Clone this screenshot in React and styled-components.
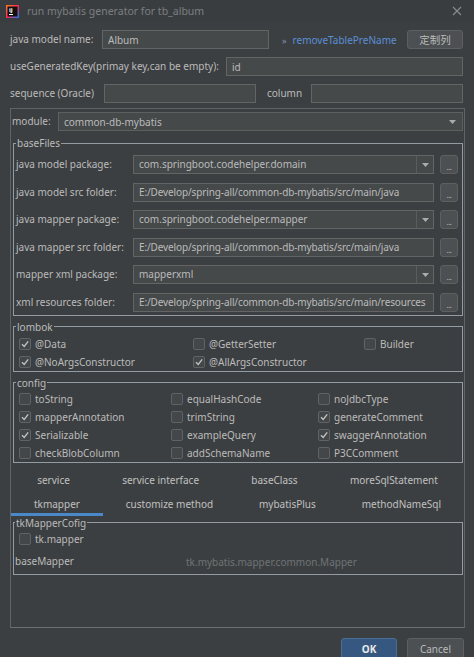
import React from "react";
import styled, { createGlobalStyle } from "styled-components";

const GlobalStyle = createGlobalStyle`
  html, body {
    margin: 0;
    padding: 0;
    background: #3c3f41;
  }
  body {
    font-family: "Noto Sans", "Noto Sans CJK SC", sans-serif;
    font-size: 10px;
    color: #bbbbbb;
  }
  * {
    box-sizing: border-box;
  }
`;

const lombokItems = [
  { label: "@Data", checked: true },
  { label: "@GetterSetter", checked: false },
  { label: "Builder", checked: false },
  { label: "@NoArgsConstructor", checked: true },
  { label: "@AllArgsConstructor", checked: true },
];

const configItems = [
  { label: "toString", checked: false },
  { label: "equalHashCode", checked: false },
  { label: "noJdbcType", checked: false },
  { label: "mapperAnnotation", checked: true },
  { label: "trimString", checked: false },
  { label: "generateComment", checked: true },
  { label: "Serializable", checked: true },
  { label: "exampleQuery", checked: false },
  { label: "swaggerAnnotation", checked: true },
  { label: "checkBlobColumn", checked: false },
  { label: "addSchemaName", checked: false },
  { label: "P3CComment", checked: false },
];

const baseFiles = [
  { label: "java model package:", value: "com.springboot.codehelper.domain", combo: true },
  { label: "java model src folder:", value: "E:/Develop/spring-all/common-db-mybatis/src/main/java" },
  { label: "java mapper package:", value: "com.springboot.codehelper.mapper", combo: true },
  { label: "java mapper src folder:", value: "E:/Develop/spring-all/common-db-mybatis/src/main/java" },
  { label: "mapper xml package:", value: "mapperxml", combo: true },
  { label: "xml resources folder:", value: "E:/Develop/spring-all/common-db-mybatis/src/main/resources" },
];

const tabRows = [
  ["service", "service interface", "baseClass", "moreSqlStatement"],
  ["tkmapper", "customize method", "mybatisPlus", "methodNameSql"],
];

const AppIcon = () => (
  <svg width="13" height="13" viewBox="0 0 13 13">
    <defs>
      <linearGradient id="ij" x1="0" y1="0" x2="1" y2="1">
        <stop offset="0" stopColor="#fc801d" />
        <stop offset="0.5" stopColor="#fe2857" />
        <stop offset="1" stopColor="#087cfa" />
      </linearGradient>
    </defs>
    <rect x="0" y="0" width="13" height="13" fill="url(#ij)" />
    <rect x="1.5" y="1.5" width="10" height="10" fill="#111" />
    <text x="3" y="7" fontSize="5" fontWeight="700" fill="#fff" fontFamily="DejaVu Sans, sans-serif">
      IJ
    </text>
    <rect x="3" y="9" width="4" height="1" fill="#fff" />
  </svg>
);

const CloseIcon = () => (
  <svg width="10" height="10" viewBox="0 0 10 10">
    <path d="M1 1 L9 9 M9 1 L1 9" stroke="#8b8e91" strokeWidth="1.1" />
  </svg>
);

const Arrow = () => (
  <svg width="7" height="4" viewBox="0 0 7 4">
    <path d="M0 0 H7 L3.5 4 Z" fill="#a9abad" />
  </svg>
);

const Window = styled.div`
  width: 474px;
  height: 657px;
  overflow: hidden;
  display: flex;
  flex-direction: column;
  background: #3c3f41;
`;

const TitleBar = styled.div`
  height: 22px;
  flex: none;
  display: flex;
  align-items: center;
  padding: 0 12px 0 6px;
  background: #3a3d3f;
`;

const TitleText = styled.span`
  flex: 1;
  margin-left: 8px;
  color: #7b7f82;
  font-size: 10.5px;
`;

const Body = styled.div`
  flex: 1;
  min-height: 0;
  display: flex;
  flex-direction: column;
  padding: 8px 9px 0 10px;
`;

const FormRow = styled.div`
  display: flex;
  align-items: center;
  height: 19px;
  padding-right: 2px;
  margin-bottom: ${(p) => (p.$last ? 0 : 8)}px;
`;

const Label = styled.span`
  flex: none;
  width: ${(p) => (p.$w ? `${p.$w}px` : "auto")};
  padding-left: ${(p) => p.$pl || 0}px;
  white-space: nowrap;
  line-height: 19px;
`;

const TextField = styled.input`
  flex: ${(p) => (p.$w ? "none" : "1")};
  width: ${(p) => (p.$w ? `${p.$w}px` : "auto")};
  min-width: 0;
  height: 19px;
  margin: 0;
  padding: 0 3px 0 5px;
  border: 1px solid #646464;
  background: #45494a;
  color: #bbbbbb;
  font: inherit;
  letter-spacing: ${(p) => (p.$tight ? "-0.12px" : "normal")};
  outline: none;
`;

const LinkText = styled.a`
  margin-left: 13px;
  color: #5a8ed6;
  text-decoration: none;
  white-space: nowrap;

  &::before {
    content: "»";
    color: #8093ad;
    font-size: 9px;
    margin-right: 6px;
  }
`;

const Button = styled.button`
  flex: none;
  width: ${(p) => p.$w}px;
  height: ${(p) => p.$h || 19}px;
  margin: 0 0 0 ${(p) => p.$ml || 0};
  padding: 0;
  border: 1px solid ${(p) => (p.$primary ? "#4a6f96" : "#5e6060")};
  border-radius: 3px;
  background: ${(p) => (p.$primary ? "#365880" : "#4c5052")};
  color: ${(p) => (p.$primary ? "#e8e8e8" : "#bbbbbb")};
  font: inherit;
  font-size: ${(p) => p.$fs || 10}px;
  font-weight: ${(p) => (p.$primary ? 700 : 400)};
`;

const DotsButton = styled(Button)`
  width: 18px;
  margin-left: 6px;
  line-height: 22px;
  font-size: 8px;
  letter-spacing: -0.5px;
`;

const Panel = styled.div`
  flex: 1;
  display: flex;
  flex-direction: column;
  margin-top: 5px;
  padding: 3px 1px 0 2px;
  border: 1px solid #5f6366;
  border-bottom-color: #6c7074;
`;

const ModuleRow = styled.div`
  display: flex;
  align-items: center;
  height: 19px;
  margin-left: -1px;
`;

const Select = styled.div`
  flex: 1;
  height: 19px;
  display: flex;
  align-items: center;
  justify-content: space-between;
  padding: 0 6px 0 5px;
  border: 1px solid #5e6060;
  background: #45494a;
`;

const Group = styled.fieldset`
  min-width: 0;
  margin: ${(p) => p.$mt || 0}px 0 0 0;
  padding: ${(p) => p.$pad};
  border: 1px solid #939ba3;
`;

const GroupTitle = styled.legend`
  padding: 0 1px;
  line-height: 14px;
  font-size: 10px;
  color: #bbbbbb;
`;

const FileList = styled.div`
  display: flex;
  flex-direction: column;
  gap: 8.6px;
`;

const FileRow = styled.div`
  display: flex;
  align-items: center;
  height: 19px;
`;

const Combo = styled.div`
  flex: none;
  width: 301px;
  height: 19px;
  display: flex;
  border: 1px solid #646464;
  background: #45494a;
`;

const ComboText = styled.span`
  flex: 1;
  padding: 0 5px;
  line-height: 17px;
  white-space: nowrap;
  overflow: hidden;
`;

const ComboArrow = styled.span`
  flex: none;
  width: 17px;
  display: flex;
  align-items: center;
  justify-content: center;
  border-left: 1px solid #5a5d5f;
`;

const CheckGrid = styled.div`
  display: grid;
  grid-template-columns: ${(p) => p.$cols};
  grid-auto-rows: 18px;
  padding-left: 3px;
`;

const CheckItem = styled.label`
  display: flex;
  align-items: center;
  gap: 4px;
  white-space: nowrap;
`;

const Box = styled.span`
  flex: none;
  width: 12px;
  height: 12px;
  display: flex;
  align-items: center;
  justify-content: center;
  border: 1px solid #5f6364;
  border-radius: 2px;
  background: #43474a;
`;

const Check = ({ checked, label }) => (
  <CheckItem>
    <Box>
      {checked && (
        <svg width="10" height="10" viewBox="0 0 10 10">
          <path d="M2 5.2 L4.2 7.4 L8.2 2.4" stroke="#c2c2c2" strokeWidth="1.4" fill="none" />
        </svg>
      )}
    </Box>
    {label}
  </CheckItem>
);

const Tabs = styled.div`
  margin: 5px -1px 0 -2px;
`;

const TabRow = styled.div`
  display: flex;
  height: 24px;
`;

const Tab = styled.div`
  flex: 1 1 auto;
  text-align: center;
  line-height: 24px;
  white-space: nowrap;
  color: #c0c0c0;
  box-shadow: ${(p) => (p.$active ? "inset 0 -3px 0 #4a88c7" : "none")};
`;

const MapperRow = styled.div`
  display: flex;
  align-items: center;
  height: ${(p) => p.$h}px;
  margin-top: ${(p) => p.$mt || 0}px;
  padding-left: ${(p) => p.$pl || 0}px;
`;

const MutedValue = styled.span`
  color: #6f7375;
  white-space: nowrap;
`;

const Footer = styled.div`
  height: 29px;
  flex: none;
  display: flex;
  justify-content: flex-end;
  align-items: flex-start;
  gap: 10px;
  padding: 10px 10px 0 0;
`;

export default function App() {
  return (
    <>
      <GlobalStyle />
      <Window>
        <TitleBar>
          <AppIcon />
          <TitleText>run mybatis generator for tb_album</TitleText>
          <CloseIcon />
        </TitleBar>

        <Body>
          <FormRow>
            <Label $w={92}>java model name:</Label>
            <TextField $w={167} defaultValue="Album" />
            <LinkText>removeTablePreName</LinkText>
            <Button $w={56} $ml="auto" $fs={10.5}>
              定制列
            </Button>
          </FormRow>
          <FormRow>
            <Label $w={216}>useGeneratedKey(primay key,can be empty):</Label>
            <TextField defaultValue="id" />
          </FormRow>
          <FormRow $last>
            <Label $w={94}>sequence (Oracle)</Label>
            <TextField $w={152} defaultValue="" />
            <Label $w={55} $pl={11}>
              column
            </Label>
            <TextField defaultValue="" />
          </FormRow>

          <Panel>
            <ModuleRow>
              <Label $w={46}>module:</Label>
              <Select>
                <span>common-db-mybatis</span>
                <Arrow />
              </Select>
            </ModuleRow>

            <Group $mt={5} $pad="5px 4px 3px 2px">
              <GroupTitle>baseFiles</GroupTitle>
              <FileList>
                {baseFiles.map((f) => (
                  <FileRow key={f.label}>
                    <Label $w={117}>{f.label}</Label>
                    {f.combo ? (
                      <Combo>
                        <ComboText>{f.value}</ComboText>
                        <ComboArrow>
                          <Arrow />
                        </ComboArrow>
                      </Combo>
                    ) : (
                      <TextField $w={301} $tight defaultValue={f.value} />
                    )}
                    <DotsButton>...</DotsButton>
                  </FileRow>
                ))}
              </FileList>
            </Group>

            <Group $mt={4} $pad="1px 2px 0 2px">
              <GroupTitle>lombok</GroupTitle>
              <CheckGrid $cols="174px 171px 1fr">
                {lombokItems.map((c) => (
                  <Check key={c.label} {...c} />
                ))}
              </CheckGrid>
            </Group>

            <Group $mt={4} $pad="0 2px 0 2px">
              <GroupTitle>config</GroupTitle>
              <CheckGrid $cols="152px 147px 1fr">
                {configItems.map((c) => (
                  <Check key={c.label} {...c} />
                ))}
              </CheckGrid>
            </Group>

            <Tabs>
              {tabRows.map((row, i) => (
                <TabRow key={i}>
                  {row.map((t) => (
                    <Tab key={t} $active={t === "tkmapper"}>
                      {t}
                    </Tab>
                  ))}
                </TabRow>
              ))}
            </Tabs>

            <Group $pad="0 2px 1px 1px">
              <GroupTitle>tkMapperCofig</GroupTitle>
              <MapperRow $h={19} $pl={4}>
                <Check checked={false} label="tk.mapper" />
              </MapperRow>
              <MapperRow $h={22} $mt={2}>
                <Label $w={171}>baseMapper</Label>
                <MutedValue>tk.mybatis.mapper.common.Mapper</MutedValue>
              </MapperRow>
            </Group>
          </Panel>
        </Body>

        <Footer>
          <Button $primary $w={56} $h={22}>
            OK
          </Button>
          <Button $w={57} $h={22}>
            Cancel
          </Button>
        </Footer>
      </Window>
    </>
  );
}
